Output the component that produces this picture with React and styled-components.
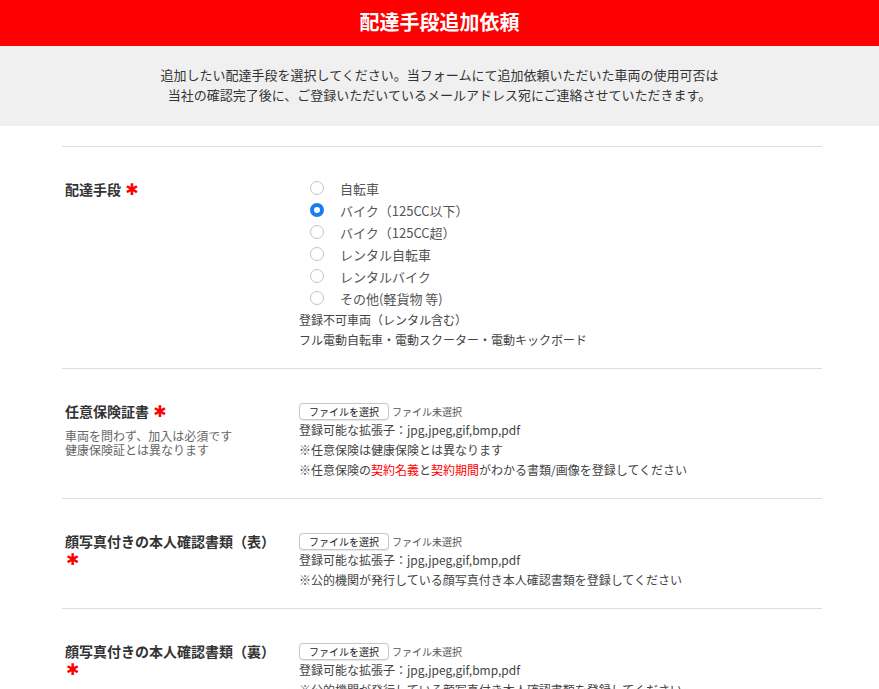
import styled, { createGlobalStyle } from 'styled-components';

const GlobalStyle = createGlobalStyle`
  body {
    margin: 0;
    background: #fff;
    color: #333;
    font-family: "Noto Sans CJK JP", "Noto Sans", sans-serif;
  }
`;

// text is kept as unicode escapes so the bundle stays ASCII
const T = {
  title: '\u914D\u9054\u624B\u6BB5\u8FFD\u52A0\u4F9D\u983C',
  intro1:
    '\u8FFD\u52A0\u3057\u305F\u3044\u914D\u9054\u624B\u6BB5\u3092\u9078\u629E\u3057\u3066\u304F\u3060\u3055\u3044\u3002\u5F53\u30D5\u30A9\u30FC\u30E0\u306B\u3066\u8FFD\u52A0\u4F9D\u983C\u3044\u305F\u3060\u3044\u305F\u8ECA\u4E21\u306E\u4F7F\u7528\u53EF\u5426\u306F',
  intro2:
    '\u5F53\u793E\u306E\u78BA\u8A8D\u5B8C\u4E86\u5F8C\u306B\u3001\u3054\u767B\u9332\u3044\u305F\u3060\u3044\u3066\u3044\u308B\u30E1\u30FC\u30EB\u30A2\u30C9\u30EC\u30B9\u5B9B\u306B\u3054\u9023\u7D61\u3055\u305B\u3066\u3044\u305F\u3060\u304D\u307E\u3059\u3002',
  method: '\u914D\u9054\u624B\u6BB5',
  ng1: '\u767B\u9332\u4E0D\u53EF\u8ECA\u4E21\uFF08\u30EC\u30F3\u30BF\u30EB\u542B\u3080\uFF09',
  ng2: '\u30D5\u30EB\u96FB\u52D5\u81EA\u8EE2\u8ECA\u30FB\u96FB\u52D5\u30B9\u30AF\u30FC\u30BF\u30FC\u30FB\u96FB\u52D5\u30AD\u30C3\u30AF\u30DC\u30FC\u30C9',
  insurance: '\u4EFB\u610F\u4FDD\u967A\u8A3C\u66F8',
  insSub1: '\u8ECA\u4E21\u3092\u554F\u308F\u305A\u3001\u52A0\u5165\u306F\u5FC5\u9808\u3067\u3059',
  insSub2: '\u5065\u5EB7\u4FDD\u967A\u8A3C\u3068\u306F\u7570\u306A\u308A\u307E\u3059',
  chooseFile: '\u30D5\u30A1\u30A4\u30EB\u3092\u9078\u629E',
  noFile: '\u30D5\u30A1\u30A4\u30EB\u672A\u9078\u629E',
  ext: '\u767B\u9332\u53EF\u80FD\u306A\u62E1\u5F35\u5B50\uFF1Ajpg,jpeg,gif,bmp,pdf',
  ins1: '\u203B\u4EFB\u610F\u4FDD\u967A\u306F\u5065\u5EB7\u4FDD\u967A\u3068\u306F\u7570\u306A\u308A\u307E\u3059',
  ins2a: '\u203B\u4EFB\u610F\u4FDD\u967A\u306E',
  ins2b: '\u5951\u7D04\u540D\u7FA9',
  ins2c: '\u3068',
  ins2d: '\u5951\u7D04\u671F\u9593',
  ins2e: '\u304C\u308F\u304B\u308B\u66F8\u985E/\u753B\u50CF\u3092\u767B\u9332\u3057\u3066\u304F\u3060\u3055\u3044',
  idFront: '\u9854\u5199\u771F\u4ED8\u304D\u306E\u672C\u4EBA\u78BA\u8A8D\u66F8\u985E\uFF08\u8868\uFF09',
  idBack: '\u9854\u5199\u771F\u4ED8\u304D\u306E\u672C\u4EBA\u78BA\u8A8D\u66F8\u985E\uFF08\u88CF\uFF09',
  idNote:
    '\u203B\u516C\u7684\u6A5F\u95A2\u304C\u767A\u884C\u3057\u3066\u3044\u308B\u9854\u5199\u771F\u4ED8\u304D\u672C\u4EBA\u78BA\u8A8D\u66F8\u985E\u3092\u767B\u9332\u3057\u3066\u304F\u3060\u3055\u3044',
  star: '\u2731',
};

const vehicles = [
  '\u81EA\u8EE2\u8ECA',
  '\u30D0\u30A4\u30AF\uFF08125CC\u4EE5\u4E0B\uFF09',
  '\u30D0\u30A4\u30AF\uFF08125CC\u8D85\uFF09',
  '\u30EC\u30F3\u30BF\u30EB\u81EA\u8EE2\u8ECA',
  '\u30EC\u30F3\u30BF\u30EB\u30D0\u30A4\u30AF',
  '\u305D\u306E\u4ED6(\u8EFD\u8CA8\u7269 \u7B49)',
];

export default function App() {
  return (
    <>
      <GlobalStyle />
      <Header>{T.title}</Header>
      <Intro>
        {T.intro1}
        <br />
        {T.intro2}
      </Intro>

      <Form>
        <Row>
          <Label>
            <LabelText>{T.method} <Req>{T.star}</Req></LabelText>
          </Label>
          <Field>
            <RadioList>
              {vehicles.map((v, i) => (
                <RadioItem key={v}>
                  <Radio $checked={i === 1} />
                  <span>{v}</span>
                </RadioItem>
              ))}
            </RadioList>
            <Note>{T.ng1}</Note>
            <Note>{T.ng2}</Note>
          </Field>
        </Row>

        <Row>
          <Label>
            <LabelText>{T.insurance} <Req>{T.star}</Req></LabelText>
            <SubText>
              {T.insSub1}
              <br />
              {T.insSub2}
            </SubText>
          </Label>
          <Field>
            <FilePicker />
            <Note>{T.ext}</Note>
            <Note>{T.ins1}</Note>
            <Note>
              {T.ins2a}<Em>{T.ins2b}</Em>{T.ins2c}<Em>{T.ins2d}</Em>{T.ins2e}
            </Note>
          </Field>
        </Row>

        <Row>
          <Label>
            <LabelText>{T.idFront} <Req>{T.star}</Req></LabelText>
          </Label>
          <Field>
            <FilePicker />
            <Note>{T.ext}</Note>
            <Note>{T.idNote}</Note>
          </Field>
        </Row>

        <Row>
          <Label>
            <LabelText>{T.idBack} <Req>{T.star}</Req></LabelText>
          </Label>
          <Field>
            <FilePicker />
            <Note>{T.ext}</Note>
            <Note>{T.idNote}</Note>
          </Field>
        </Row>
      </Form>
    </>
  );
}

function FilePicker() {
  return (
    <FileRow>
      <FileButton>
        {T.chooseFile}
        <input type="file" hidden />
      </FileButton>
      <FileName>{T.noFile}</FileName>
    </FileRow>
  );
}

const Header = styled.header`
  height: 46px;
  background: #ff0000;
  color: #fff;
  font-size: 20px;
  font-weight: 700;
  display: flex;
  align-items: center;
  justify-content: center;
  padding-bottom: 4px;
  box-sizing: border-box;
`;

const Intro = styled.section`
  background: #f0f0f0;
  height: 80px;
  box-sizing: border-box;
  padding-top: 19px;
  text-align: center;
  font-size: 13px;
  line-height: 20px;
  color: #333;
`;

const Form = styled.div`
  width: 760px;
  margin: 20px 0 0 62px;
  border-top: 1px solid #ddd;
`;

const Row = styled.div`
  display: grid;
  grid-template-columns: 237px 1fr;
  padding: 33px 0 18px;
  border-bottom: 1px solid #ddd;
`;

const Label = styled.div`
  padding: 0 15px 0 3px;
`;

const LabelText = styled.div`
  font-size: 14px;
  font-weight: 700;
  line-height: 18px;
  color: #333;
`;

const Req = styled.span`
  color: #f00;
  font-family: "DejaVu Sans", sans-serif;
  font-size: 16px;
  line-height: 18px;
  margin-left: 1px;
`;

const SubText = styled.div`
  margin-top: 8px;
  font-size: 12px;
  line-height: 14px;
  color: #666;
`;

const Field = styled.div`
  font-size: 12px;
  color: #444;
`;

const RadioList = styled.div`
  display: flex;
  flex-direction: column;
  margin: -3px 0 1px;
  padding-left: 11px;
`;

const RadioItem = styled.label`
  display: flex;
  align-items: center;
  height: 22px;
  gap: 16px;
  color: #555;
  font-size: 13px;
`;

const Radio = styled.span`
  width: 14px;
  height: 14px;
  border-radius: 50%;
  box-sizing: border-box;
  background: #fff;
  border: ${(p) => (p.$checked ? '4px solid #1a7cf5' : '1px solid #c4c4c4')};
  flex: none;
`;

const Note = styled.div`
  line-height: 20px;
  color: #444;
`;

const Em = styled.span`
  color: #ff0000;
`;

const FileRow = styled.div`
  display: flex;
  align-items: center;
  gap: 3px;
  height: 18px;
`;

const FileButton = styled.label`
  display: inline-flex;
  align-items: center;
  height: 17px;
  padding: 0 9px;
  border: 1px solid #c8c8c8;
  border-radius: 4px;
  background: #fff;
  font-size: 10px;
  color: #222;
  box-sizing: border-box;
  box-shadow: 0 0.5px 1px rgba(0, 0, 0, 0.1);
`;

const FileName = styled.span`
  font-size: 10px;
  color: #555;
`;
